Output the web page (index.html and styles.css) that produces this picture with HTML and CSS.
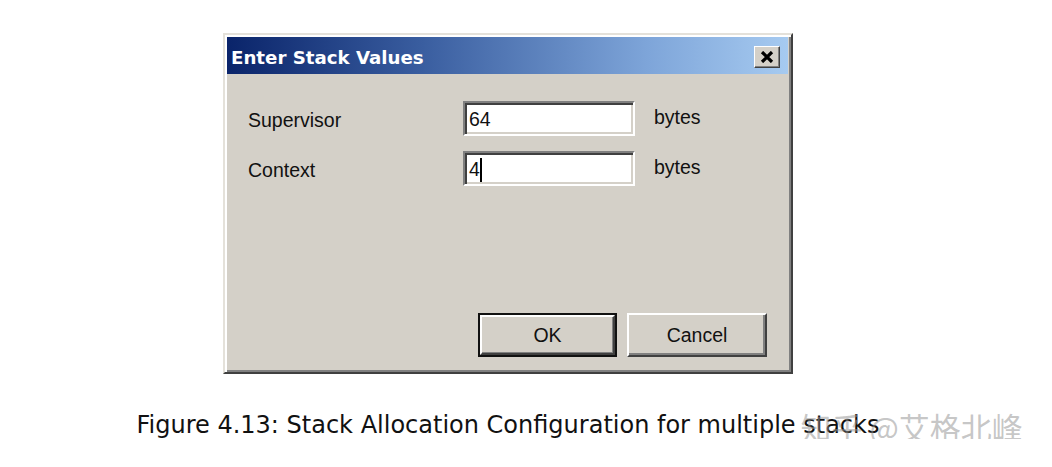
FILE: index.html
```html
<!DOCTYPE html>
<html>
<head>
<meta charset="utf-8">
<link rel="stylesheet" href="styles.css">
</head>
<body>
<div class="figure">
  <div class="dialog">
    <div class="titlebar">
      <span class="title">Enter Stack Values</span>
      <span class="close">
        <svg width="14" height="12" viewBox="0 0 14 12"><path d="M2 1 L12 11 M12 1 L2 11" stroke="#000" stroke-width="3.2" stroke-linecap="butt"/></svg>
      </span>
    </div>
    <div class="content">
      <div class="form">
        <span class="label">Supervisor</span>
        <span class="field">64</span>
        <span class="unit">bytes</span>
        <span class="label">Context</span>
        <span class="field">4<span class="caret"></span></span>
        <span class="unit">bytes</span>
      </div>
      <div class="buttons">
        <span class="btn default"><span class="btn-inner">OK</span></span>
        <span class="btn"><span class="btn-inner">Cancel</span></span>
      </div>
    </div>
  </div>
  <div class="caption">Figure 4.13: Stack Allocation Configuration for multiple stacks<span class="watermark">知乎 @艾格北峰</span></div>
</div>
</body>
</html>
```
FILE: styles.css
```css
html, body {
  margin: 0;
  padding: 0;
  background: #ffffff;
}
.figure {
  width: 1016px;
  display: flex;
  flex-direction: column;
  align-items: center;
  padding-top: 33px;
}
.dialog {
  box-sizing: border-box;
  width: 570px;
  height: 341px;
  background: #d4d0c8;
  border: 2px solid;
  border-color: #e4e1da #404040 #404040 #e4e1da;
  box-shadow: inset 2px 2px 0 #ffffff, inset -2px -2px 0 #808080;
  padding: 2px 3px 3px 2px;
  display: flex;
  flex-direction: column;
  font-family: "Liberation Sans", Arial, sans-serif;
  font-size: 19.5px;
  color: #111;
}
.titlebar {
  height: 37px;
  background: linear-gradient(to right, #0a246a 0%, #3a5ea0 35%, #7ea5d9 75%, #a6caf0 100%);
  display: flex;
  align-items: center;
  justify-content: space-between;
  padding: 0 8px 0 4px;
}
.title {
  font-family: "DejaVu Sans", Verdana, sans-serif;
  font-weight: bold;
  font-size: 18.2px;
  color: #ffffff;
  padding-top: 3px;
}
.close {
  box-sizing: border-box;
  width: 26px;
  height: 22px;
  background: #d4d0c8;
  border: 1px solid;
  border-color: #ffffff #404040 #404040 #ffffff;
  box-shadow: inset -1px -1px 0 #808080;
  display: flex;
  align-items: center;
  justify-content: center;
  margin-top: 2px;
}
.content {
  flex: 1;
  display: flex;
  flex-direction: column;
  justify-content: space-between;
  padding: 27px 21px 12px 21px;
}
.form {
  display: grid;
  grid-template-columns: 196px 172px auto;
  column-gap: 19px;
  row-gap: 15px;
  align-items: center;
}
.label {
  padding-top: 3px;
}
.unit {
  margin-top: -3px;
}
.field {
  box-sizing: border-box;
  height: 35px;
  background: #ffffff;
  border: 2px solid;
  border-color: #808080 #ffffff #ffffff #808080;
  box-shadow: inset 2px 2px 0 #404040, inset -2px -2px 0 #d4d0c8;
  padding: 3px 4px 0 4px;
  display: flex;
  align-items: center;
  line-height: 1;
}
.caret {
  display: inline-block;
  width: 2px;
  height: 24px;
  background: #000;
}
.buttons {
  display: flex;
  justify-content: flex-end;
  gap: 10px;
}
.btn {
  box-sizing: border-box;
  width: 140px;
  height: 44px;
  border: 2px solid;
  border-color: #ffffff #404040 #404040 #ffffff;
  box-shadow: inset -2px -2px 0 #808080;
  background: #d4d0c8;
  display: flex;
}
.btn.default {
  border: 2px solid #111;
  box-shadow: none;
  width: 139px;
}
.btn-inner {
  flex: 1;
  display: flex;
  align-items: center;
  justify-content: center;
}
.btn.default .btn-inner {
  border: 2px solid;
  border-color: #ffffff #404040 #404040 #ffffff;
  box-shadow: inset -1px -1px 0 #808080;
}
.caption {
  position: relative;
  margin-top: 37px;
  font-family: "DejaVu Sans", Verdana, sans-serif;
  font-size: 24px;
  color: #111;
  white-space: nowrap;
}
.watermark {
  position: absolute;
  left: 664px;
  top: -7px;
  font-family: "Noto Sans CJK SC", sans-serif;
  font-size: 31px;
  color: rgba(150, 150, 150, 0.55);
  white-space: nowrap;
}
```
